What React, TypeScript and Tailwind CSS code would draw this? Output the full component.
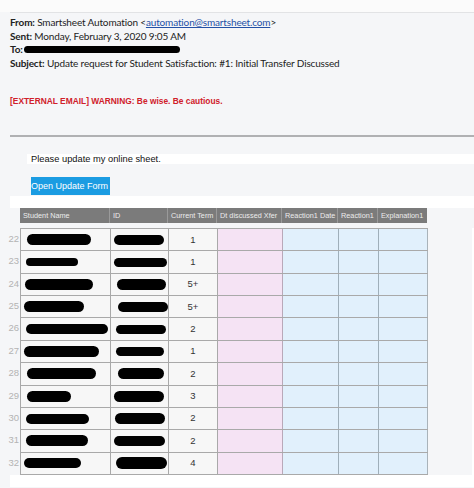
import React from "react";

type Row = {
  num: number;
  term: string;
  name: [number, number, number];
  id: [number, number, number];
};

// redaction blobs: [left offset in cell, width, height]
const rows: Row[] = [
  { num: 22, term: "1", name: [6, 64, 11], id: [3, 50, 10] },
  { num: 23, term: "1", name: [5, 52, 8], id: [3, 53, 9] },
  { num: 24, term: "5+", name: [4, 68, 11], id: [6, 49, 11] },
  { num: 25, term: "5+", name: [3, 60, 11], id: [7, 50, 10] },
  { num: 26, term: "2", name: [5, 82, 10], id: [5, 50, 9] },
  { num: 27, term: "1", name: [3, 75, 11], id: [5, 48, 9] },
  { num: 28, term: "2", name: [6, 69, 11], id: [7, 46, 11] },
  { num: 29, term: "3", name: [6, 44, 11], id: [3, 50, 11] },
  { num: 30, term: "2", name: [5, 63, 10], id: [4, 50, 11] },
  { num: 31, term: "2", name: [5, 62, 11], id: [3, 51, 10] },
  { num: 32, term: "4", name: [3, 57, 10], id: [5, 51, 12] },
];

const headers = [
  { label: "Student Name", w: "w-[90px]" },
  { label: "ID", w: "w-[58px]" },
  { label: "Current Term", w: "w-[49px]" },
  { label: "Dt discussed Xfer", w: "w-[65px]" },
  { label: "Reaction1 Date", w: "w-[56px]" },
  { label: "Reaction1", w: "w-[40px]" },
  { label: "Explanation1", w: "w-[49px]" },
];

function Blob({ spec }: { spec: [number, number, number] }) {
  return (
    <div
      className="bg-black rounded-full"
      style={{ marginLeft: spec[0], width: spec[1], height: spec[2] }}
    />
  );
}

export default function App() {
  return (
    <div className="w-[474px] h-[488px] overflow-hidden bg-[#f5f6f8] text-[#222]">
      <div className="h-[12px] bg-[#fbfbfb]" />
      {/* email header */}
      <div
        className="ml-[10px] border-t border-[#e2e3e5] pt-[3px] text-[10px] leading-[13.5px] tracking-[-0.15px]"
        style={{ fontFamily: "Lato, 'Open Sans', sans-serif" }}
      >
        <div>
          <b>From:</b> Smartsheet Automation &lt;
          <span className="text-[#2451a6] underline">automation@smartsheet.com</span>&gt;
        </div>
        <div>
          <b>Sent:</b> Monday, February 3, 2020 9:05 AM
        </div>
        <div className="flex items-center">
          <b>To:</b>
          <div className="ml-[1px] h-[7px] w-[156px] rounded-full bg-black" />
        </div>
        <div>
          <b>Subject:</b> Update request for Student Satisfaction: #1: Initial Transfer Discussed
        </div>
      </div>

      <div style={{ fontFamily: "'Liberation Sans', Arial, sans-serif" }}>
        <div className="ml-[10px] mt-[25px] text-[8.4px] leading-[12px] font-bold text-[#d0202a]">
          [EXTERNAL EMAIL] WARNING: Be wise. Be cautious.
        </div>

        <div className="ml-[10px] mt-[28px] h-[2px] bg-[#b0b1b3]" />

        <div className="ml-[27px] mt-[17px] h-[10px] bg-white pl-[4px] text-[9.3px] leading-[10px] text-[#111]">
          Please update my online sheet.
        </div>

        <div className="ml-[31px] mt-[13px] w-[79px] h-[18px] bg-[#1b9ce2] text-white text-[9px] leading-[18px] whitespace-nowrap">
          Open Update Form
        </div>

        <div className="ml-[10px] mt-[1px] h-[12px] bg-white" />

        {/* table */}
        <div className="flex">
          <div className="w-[20px]" />
          <div className="flex flex-col">
            <div className="flex h-[15px] bg-[#7b7b7b] text-[7.3px] leading-[15px] text-[#ececec]">
              {headers.map((h, i) => (
                <div
                  key={h.label}
                  className={`${h.w} pl-[3px] whitespace-nowrap overflow-hidden ${
                    i < headers.length - 1 ? "border-r border-[#9a9a9a]" : ""
                  }`}
                >
                  {h.label}
                </div>
              ))}
            </div>
            <div className="h-[5px]" />
          </div>
        </div>

        <div className="flex">
          <div className="w-[20px] flex flex-col">
            {rows.map((r) => (
              <div
                key={r.num}
                className="h-[22.36px] flex items-center justify-end pr-[1px] text-[9.5px] text-[#b3b3b3]"
              >
                {r.num}
              </div>
            ))}
          </div>
          <div className="flex flex-col border-l border-t border-[#a9a9a9]">
            {rows.map((r) => (
              <div key={r.num} className="flex h-[22.36px] border-b border-[#a9a9a9]">
                <div className="w-[90px] bg-[#f7f7f7] border-r border-[#a9a9a9] flex items-center">
                  <Blob spec={r.name} />
                </div>
                <div className="w-[58px] bg-[#f7f7f7] border-r border-[#a9a9a9] flex items-center">
                  <Blob spec={r.id} />
                </div>
                <div className="w-[49px] bg-[#f7f7f7] border-r border-[#a9a9a9] flex items-center justify-center text-[9.5px] text-[#333]">
                  {r.term}
                </div>
                <div className="w-[65px] bg-[#f5e3f4] border-r border-[#b9a9b9]" />
                <div className="w-[56px] bg-[#e1f0fc] border-r border-[#9fafba]" />
                <div className="w-[40px] bg-[#e1f0fc] border-r border-[#9fafba]" />
                <div className="w-[49px] bg-[#e1f0fc] border-r border-[#a9b3ba]" />
              </div>
            ))}
          </div>
          <div className="flex-1 bg-[#f5f6f8]" />
          <div className="w-[2px] bg-white" />
        </div>

        <div className="ml-[10px] h-[12px] bg-white" />
      </div>
    </div>
  );
}
